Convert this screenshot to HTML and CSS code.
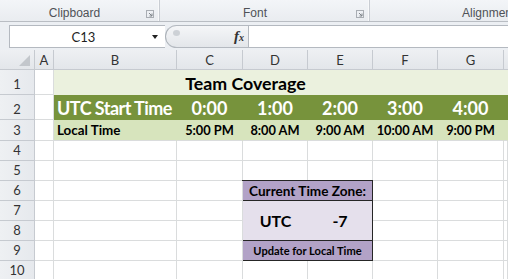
FILE: index.html
```html
<!DOCTYPE html>
<html>
<head>
<meta charset="utf-8">
<link rel="stylesheet" href="styles.css">
</head>
<body>
<div class="ribbon">
  <div class="grp g1"><span class="lbl">Clipboard</span><svg class="launch" width="8" height="8" viewBox="0 0 8 8"><rect x="0.5" y="0.5" width="7" height="7" fill="none" stroke="#a9adb3"/><path d="M3 3 L6 6 M6 3.5 V6 H3.5" stroke="#7d8288" fill="none"/></svg></div>
  <div class="grp g2"><span class="lbl">Font</span><svg class="launch" width="8" height="8" viewBox="0 0 8 8"><rect x="0.5" y="0.5" width="7" height="7" fill="none" stroke="#a9adb3"/><path d="M3 3 L6 6 M6 3.5 V6 H3.5" stroke="#7d8288" fill="none"/></svg></div>
  <div class="grp g3"><span class="lbl">Alignment</span></div>
</div>
<div class="fbar">
  <div class="namebox"><span class="ref">C13</span><span class="dd"></span></div>
  <div class="fxzone"><span class="knob"></span><span class="fx">f<span class="fxsub">x</span></span></div>
  <div class="formula"></div>
</div>
<div class="sheet">
  <div class="corner"><span class="selall"></span></div>
  <div class="ch">A</div><div class="ch">B</div><div class="ch">C</div><div class="ch">D</div><div class="ch">E</div><div class="ch">F</div><div class="ch">G</div><div class="ch last"></div>

  <div class="rh">1</div><div class="c"></div><div class="c r1 title">Team Coverage</div><div class="c r1"></div><div class="c r1"></div>

  <div class="rh">2</div><div class="c"></div><div class="c r2 lab">UTC Start Time</div><div class="c r2 t">0:00</div><div class="c r2 t">1:00</div><div class="c r2 t">2:00</div><div class="c r2 t">3:00</div><div class="c r2 t">4:00</div><div class="c r2"></div>

  <div class="rh">3</div><div class="c"></div><div class="c r3 lab">Local Time</div><div class="c r3 t">5:00 PM</div><div class="c r3 t">8:00 AM</div><div class="c r3 t">9:00 AM</div><div class="c r3 t">10:00 AM</div><div class="c r3 t">9:00 PM</div><div class="c r3"></div>

  <div class="rh">4</div><div class="c"></div><div class="c"></div><div class="c"></div><div class="c"></div><div class="c"></div><div class="c"></div><div class="c"></div><div class="c"></div>
  <div class="rh">5</div><div class="c"></div><div class="c"></div><div class="c"></div><div class="c"></div><div class="c"></div><div class="c"></div><div class="c"></div><div class="c"></div>

  <div class="tzbox">
    <div class="tzhead">Current Time Zone:</div>
    <div class="tzbody"><span>UTC</span><span>-7</span></div>
    <div class="tzfoot">Update for Local Time</div>
  </div>

  <div class="rh">6</div><div class="c"></div><div class="c"></div><div class="c"></div><div class="c"></div><div class="c"></div><div class="c"></div>
  <div class="rh">7</div><div class="c"></div><div class="c"></div><div class="c"></div><div class="c"></div><div class="c"></div><div class="c"></div>
  <div class="rh">8</div><div class="c"></div><div class="c"></div><div class="c"></div><div class="c"></div><div class="c"></div><div class="c"></div>
  <div class="rh">9</div><div class="c"></div><div class="c"></div><div class="c"></div><div class="c"></div><div class="c"></div><div class="c"></div>
  <div class="rh">10</div><div class="c"></div><div class="c"></div><div class="c"></div><div class="c"></div><div class="c"></div><div class="c"></div><div class="c"></div><div class="c"></div>
</div>
</body>
</html>
```
FILE: styles.css
```css
* { box-sizing: border-box; }
html, body { margin: 0; padding: 0; }
body {
  width: 508px;
  height: 279px;
  overflow: hidden;
  background: #ffffff;
  font-family: Lato, "Liberation Sans", sans-serif;
}

/* ribbon */
.ribbon {
  display: flex;
  height: 22px;
  background: linear-gradient(#f3f5f8, #e9ecf0);
  border-bottom: 1px solid #b9bdc3;
}
.grp {
  display: flex;
  align-items: flex-start;
  flex-shrink: 0;
  border-right: 1px solid #c9cdd3;
  box-shadow: inset -1px 0 0 #f8f9fa;
}
.g1 { width: 160px; }
.g2 { width: 210px; }
.g3 { flex: 1 1 0; min-width: 0; overflow: hidden; border-right: none; box-shadow: none; }
.lbl {
  flex: 1;
  text-align: center;
  white-space: nowrap;
  font-family: "Liberation Sans", sans-serif;
  font-size: 12px;
  line-height: 14px;
  padding-top: 6px;
  color: #4f5257;
}
.g1 .lbl { padding-left: 3px; }
.g2 .lbl { padding-left: 0; padding-right: 6px; }
.g3 .lbl { text-align: left; padding-left: 92px; }
.launch { margin: 10px 5px 0 0; flex-shrink: 0; }

/* formula bar */
.fbar {
  display: flex;
  height: 28px;
  padding: 3px 0 2px 9px;
  background: #eceff3;
}
.namebox {
  width: 156px;
  flex-shrink: 0;
  display: flex;
  align-items: center;
  background: #fff;
  border: 1px solid #b4b9c0;
  border-right: none;
}
.ref {
  flex: 1;
  text-align: center;
  font-size: 13px;
  color: #1e1e1e;
  padding-left: 5px;
}
.dd {
  width: 0; height: 0;
  margin: 0 7px 0 0;
  border-left: 3.5px solid transparent;
  border-right: 3.5px solid transparent;
  border-top: 4px solid #222;
}
.fxzone {
  width: 83px;
  flex-shrink: 0;
  position: relative;
  display: flex;
  align-items: center;
  justify-content: flex-end;
  padding-right: 4px;
  background: linear-gradient(#f5f6f8, #e3e6ea);
  border-top: 1px solid #b4b9c0;
  border-bottom: 1px solid #b4b9c0;
  border-left: 1px solid #aab0b7;
  border-radius: 12px 0 0 12px;
}
.knob {
  position: absolute;
  left: 7px;
  top: 4px;
  width: 7px;
  height: 6px;
  border-radius: 50%;
  background: #cdd1d6;
}
.fx {
  font-family: "Liberation Serif", serif;
  font-style: italic;
  font-weight: bold;
  font-size: 15px;
  color: #333;
  line-height: 1;
}
.fxsub { font-size: 10px; }
.formula {
  flex: 1;
  background: #fff;
  border: 1px solid #b4b9c0;
  border-right: none;
}

/* sheet grid */
.sheet {
  display: grid;
  grid-template-columns: 35px 19px 123px 66px 65px 65px 65px 66px 1fr;
  grid-template-rows: 20px 25px 25px 21px repeat(7, 20px);
}
.corner, .ch, .rh {
  background: linear-gradient(#eef0f3, #e3e6ea);
  border-right: 1px solid #c6cad0;
  border-bottom: 1px solid #c6cad0;
  color: #333;
  font-size: 13px;
}
.corner { position: relative; }
.selall {
  position: absolute;
  right: 4px;
  bottom: 3px;
  width: 0; height: 0;
  border-left: 11px solid transparent;
  border-bottom: 11px solid #c3c7cc;
}
.ch {
  display: flex;
  align-items: center;
  justify-content: center;
}
.ch.last { border-right: none; }
.rh {
  display: flex;
  align-items: flex-end;
  justify-content: center;
  padding-bottom: 2px;
  background: linear-gradient(90deg, #eef0f3, #e6e9ed);
}
.c {
  border-right: 1px solid #dadcdd;
  border-bottom: 1px solid #dadcdd;
  display: flex;
  align-items: flex-end;
  white-space: nowrap;
  overflow: hidden;
  font-weight: bold;
  color: #000;
}
.r1 { background: #ebf1de; border-color: transparent; }
.r2 { background: #77933c; border-color: transparent; color: #fff; }
.r3 { background: #d7e4bd; border-right-color: transparent; }
.title {
  grid-column: span 5;
  justify-content: center;
  font-size: 17.8px;
}
.r2 { font-size: 18px; }
.r2.lab { letter-spacing: -0.55px; }
.r3 { font-size: 12.8px; padding-bottom: 2px; }
.r3.lab { font-size: 13.4px; }
.lab { padding-left: 3px; }
.t { justify-content: center; }

/* time zone box */
.tzbox {
  grid-column: 5 / 7;
  grid-row: 7 / 11;
  margin: -1px 0 0 -1px;
  border: 1px solid #262626;
  display: flex;
  flex-direction: column;
  font-weight: bold;
  color: #000;
}
.tzhead {
  height: 20px;
  background: #b2a2c7;
  border-bottom: 1px solid #262626;
  display: flex;
  align-items: flex-end;
  justify-content: center;
  font-size: 13.6px;
  padding-bottom: 1px;
}
.tzbody {
  flex: 1;
  background: #e5e0ec;
  border-bottom: 1px solid #262626;
  display: grid;
  grid-template-columns: 65px 1fr;
  align-items: center;
  font-size: 16px;
}
.tzbody span { text-align: center; }
.tzfoot {
  height: 19px;
  background: #b2a2c7;
  display: flex;
  align-items: center;
  justify-content: center;
  font-size: 11.1px;
}
```
